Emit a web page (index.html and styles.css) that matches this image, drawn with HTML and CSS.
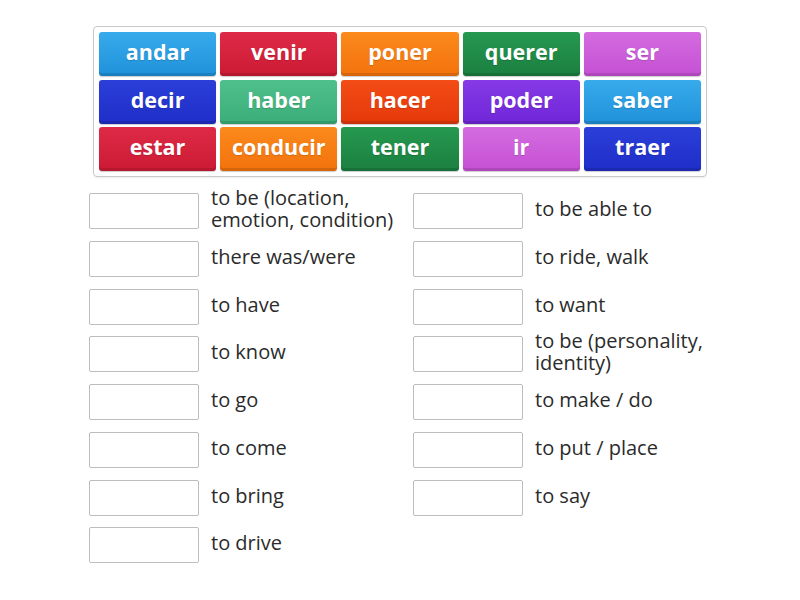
FILE: index.html
```html
<!DOCTYPE html>
<html lang="en">

<head>
  <meta charset="UTF-8">
  <meta name="viewport" content="width=device-width, initial-scale=1.0">
  <title>Spanish verbs - Match up</title>
  <link rel="stylesheet" href="styles.css">
</head>

<body>
  <div id="bank">
    <div class="tile blue">andar</div>
    <div class="tile red">venir</div>
    <div class="tile orange">poner</div>
    <div class="tile dgreen">querer</div>
    <div class="tile orchid">ser</div>

    <div class="tile dblue">decir</div>
    <div class="tile green">haber</div>
    <div class="tile redorange">hacer</div>
    <div class="tile purple">poder</div>
    <div class="tile blue">saber</div>

    <div class="tile red">estar</div>
    <div class="tile orange">conducir</div>
    <div class="tile dgreen">tener</div>
    <div class="tile orchid">ir</div>
    <div class="tile dblue">traer</div>
  </div>

  <div id="matches">
    <div class="column">
      <div class="row"><div class="slot"></div><div class="label">to be (location, emotion, condition)</div></div>
      <div class="row"><div class="slot"></div><div class="label">there was/were</div></div>
      <div class="row"><div class="slot"></div><div class="label">to have</div></div>
      <div class="row"><div class="slot"></div><div class="label">to know</div></div>
      <div class="row"><div class="slot"></div><div class="label">to go</div></div>
      <div class="row"><div class="slot"></div><div class="label">to come</div></div>
      <div class="row"><div class="slot"></div><div class="label">to bring</div></div>
      <div class="row"><div class="slot"></div><div class="label">to drive</div></div>
    </div>
    <div class="column">
      <div class="row"><div class="slot"></div><div class="label">to be able to</div></div>
      <div class="row"><div class="slot"></div><div class="label">to ride, walk</div></div>
      <div class="row"><div class="slot"></div><div class="label">to want</div></div>
      <div class="row"><div class="slot"></div><div class="label">to be (personality, identity)</div></div>
      <div class="row"><div class="slot"></div><div class="label">to make / do</div></div>
      <div class="row"><div class="slot"></div><div class="label">to put / place</div></div>
      <div class="row"><div class="slot"></div><div class="label">to say</div></div>
    </div>
  </div>
</body>

</html>
```

FILE: styles.css
```css
body {
  font-family: 'Open Sans', sans-serif;
  background-color: #fff;
  margin: 0;
  padding: 0;
}

#bank {
  width: 602px;
  margin: 26px 0 0 93px;
  padding: 5px;
  border: 1px solid #c8c8c8;
  border-radius: 4px;
  display: grid;
  grid-template-columns: repeat(5, 1fr);
  grid-auto-rows: 44px;
  gap: 3.5px 4px;
  box-shadow: 0 1px 2px rgba(0, 0, 0, 0.08);
}

.tile {
  display: flex;
  align-items: center;
  justify-content: center;
  color: #fff;
  font-size: 21.5px;
  font-weight: bold;
  border-radius: 3px;
  padding-bottom: 5px;
  box-sizing: border-box;
  text-shadow: 0 1px 1px rgba(0, 0, 0, 0.15);
  box-shadow: inset 0 -3px 0 rgba(0, 0, 0, 0.12), 0 1px 1px rgba(0, 0, 0, 0.2);
}

.blue { background: linear-gradient(#38abec, #1f91da); }
.red { background: linear-gradient(#de2a46, #cc1a34); }
.orange { background: linear-gradient(#fb8a1c, #f3720c); }
.dgreen { background: linear-gradient(#26994f, #1b7f40); }
.orchid { background: linear-gradient(#d46ce0, #c550d4); }
.dblue { background: linear-gradient(#2b3fd8, #1f2ec8); }
.green { background: linear-gradient(#4fc08c, #3aad78); }
.redorange { background: linear-gradient(#f34c16, #e5380a); }
.purple { background: linear-gradient(#863ae6, #6f26d8); }

#matches {
  display: flex;
  margin: 16px 0 0 89px;
}

.column {
  width: 324px;
  display: flex;
  flex-direction: column;
  gap: 11.75px;
}

.row {
  display: flex;
  align-items: center;
  height: 36px;
}

.slot {
  flex: 0 0 auto;
  width: 108px;
  height: 34px;
  border: 1px solid #bdbdbd;
  border-radius: 2px;
  background-color: #fff;
}

.label {
  margin-left: 12px;
  width: 190px;
  padding-bottom: 4px;
  font-size: 20px;
  line-height: 22px;
  color: #2b2b2b;
}
```
